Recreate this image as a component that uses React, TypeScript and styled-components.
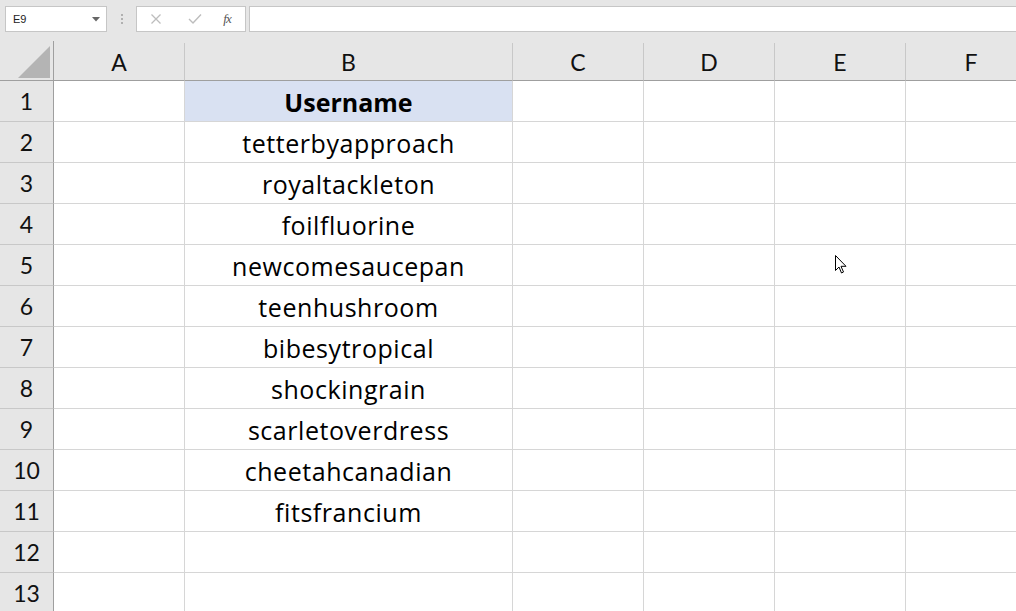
import React from 'react';
import styled, { createGlobalStyle } from 'styled-components';

const GlobalStyle = createGlobalStyle`
  html, body {
    margin: 0;
    padding: 0;
    background: #ffffff;
    overflow: hidden;
  }
  body {
    font-family: Lato, "Open Sans", sans-serif;
  }
`

const Window = styled.div`
  width: 1016px;
  height: 611px;
  position: relative;
  overflow: hidden;
  background: #e6e6e6;
`

const FormulaBar = styled.div`
  display: flex;
  align-items: center;
  height: 41px;
  padding: 0 0 3px 5px;
  box-sizing: border-box;
`

const NameBox = styled.div`
  display: flex;
  align-items: center;
  justify-content: space-between;
  width: 102px;
  height: 26px;
  box-sizing: border-box;
  background: #ffffff;
  border: 1px solid #c6c6c6;
  padding: 0 6px 0 7px;
  font-family: "Liberation Sans", sans-serif;
  font-size: 11px;
  color: #222;
`

const Dots = styled.div`
  display: flex;
  flex-direction: column;
  gap: 2px;
  margin: 0 13px 0 14px;
  span {
    width: 2px;
    height: 2px;
    background: #b0b0b0;
  }
`

const ButtonBox = styled.div`
  display: flex;
  align-items: center;
  width: 110px;
  height: 26px;
  box-sizing: border-box;
  background: #ffffff;
  border: 1px solid #c6c6c6;
  padding: 0 0 0 12px;
`

const BarButton = styled.div<{ $w: number }>`
  width: ${p => p.$w}px;
  display: flex;
  justify-content: center;
  align-items: center;
`

const Fx = styled.span`
  font-family: "Liberation Serif", serif;
  font-style: italic;
  font-size: 13px;
  color: #555;
  letter-spacing: -1px;
`

const FormulaInput = styled.div`
  flex: 1;
  height: 26px;
  margin-left: 3px;
  box-sizing: border-box;
  background: #ffffff;
  border: 1px solid #c6c6c6;
  border-right: none;
`

// the last column runs past the window edge, like the sheet does
const Grid = styled.div`
  display: grid;
  grid-template-columns: 54px 131px 328px 131px 131px 131px 131px;
  grid-template-rows: 40px;
  grid-auto-rows: 41px;
  width: max-content;
  background: #ffffff;
`

const HeadCell = styled.div<{ $corner?: boolean }>`
  background: #e6e6e6;
  border-bottom: 1px solid #9f9f9f;
  border-right: 1px solid ${p => (p.$corner ? '#9f9f9f' : '#c8c8c8')};
  box-sizing: border-box;
  display: flex;
  align-items: center;
  justify-content: center;
  padding-top: 2px;
  font-size: 23px;
  color: #111;
  position: relative;
`

const HeadDivider = styled.div`
  position: absolute;
  right: -1px;
  top: 0;
  width: 1px;
  height: 2px;
  background: #e6e6e6;
`

const CornerMark = styled.svg`
  position: absolute;
  right: 3px;
  bottom: 2px;
`

const RowHead = styled.div`
  background: #e6e6e6;
  border-right: 1px solid #9f9f9f;
  border-bottom: 1px solid #c8c8c8;
  box-sizing: border-box;
  display: flex;
  align-items: center;
  justify-content: center;
  font-size: 23px;
  color: #111;
`

const Cell = styled.div<{ $bold?: boolean; $fill?: boolean }>`
  border-right: 1px solid #d6d6d6;
  border-bottom: 1px solid #d6d6d6;
  box-sizing: border-box;
  display: flex;
  align-items: center;
  justify-content: center;
  padding-top: 2px;
  font-family: "Open Sans", Lato, sans-serif;
  font-size: 25px;
  letter-spacing: ${p => (p.$bold ? '0' : '0.55px')};
  font-weight: ${p => (p.$bold ? 700 : 400)};
  background: ${p => (p.$fill ? '#d9e1f2' : '#ffffff')};
  color: #000;
  white-space: nowrap;
`

const Pointer = styled.svg`
  position: absolute;
  left: 835px;
  top: 255px;
`

const columns = ['A', 'B', 'C', 'D', 'E', 'F'];

const usernames = [
  'tetterbyapproach',
  'royaltackleton',
  'foilfluorine',
  'newcomesaucepan',
  'teenhushroom',
  'bibesytropical',
  'shockingrain',
  'scarletoverdress',
  'cheetahcanadian',
  'fitsfrancium',
];

export default function App() {
  const rows = Array.from({ length: 13 }, (_, i) => i + 1);

  return (
    <Window>
      <GlobalStyle />
      <FormulaBar>
        <NameBox>
          <span>E9</span>
          <svg width="8" height="5" viewBox="0 0 8 5">
            <path d="M0 0 L8 0 L4 4.5 Z" fill="#666" />
          </svg>
        </NameBox>
        <Dots>
          <span />
          <span />
          <span />
        </Dots>
        <ButtonBox>
          <BarButton $w={14}>
            <svg width="12" height="12" viewBox="0 0 12 12">
              <path d="M1.5 1.5 L10.5 10.5 M10.5 1.5 L1.5 10.5" stroke="#bdbdbd" strokeWidth="1.3" fill="none" />
            </svg>
          </BarButton>
          <BarButton $w={64}>
            <svg width="14" height="12" viewBox="0 0 14 12">
              <path d="M1 6 L5 10 L13 1.5" stroke="#bdbdbd" strokeWidth="1.4" fill="none" />
            </svg>
          </BarButton>
          <BarButton $w={0}>
            <Fx>fx</Fx>
          </BarButton>
        </ButtonBox>
        <FormulaInput />
      </FormulaBar>

      <Grid>
        <HeadCell $corner>
          <CornerMark width="32" height="32" viewBox="0 0 32 32">
            <path d="M32 0 L32 32 L0 32 Z" fill="#b4b4b4" />
          </CornerMark>
        </HeadCell>
        {columns.map(c => (
          <HeadCell key={c}>
            {c}
            <HeadDivider />
          </HeadCell>
        ))}

        {rows.map(r => (
          <React.Fragment key={r}>
            <RowHead>{r}</RowHead>
            <Cell />
            <Cell $bold={r === 1} $fill={r === 1}>
              {r === 1 ? 'Username' : usernames[r - 2] ?? ''}
            </Cell>
            <Cell />
            <Cell />
            <Cell />
            <Cell />
          </React.Fragment>
        ))}
      </Grid>

      <Pointer width="12" height="20" viewBox="0 0 12 20">
        <path
          d="M0.5 0.5 L0.5 15.5 L4 12 L6.5 18 L8.5 17 L6 11.3 L11 11.3 Z"
          fill="#ffffff"
          stroke="#000000"
          strokeWidth="1"
        />
      </Pointer>
    </Window>
  );
}
